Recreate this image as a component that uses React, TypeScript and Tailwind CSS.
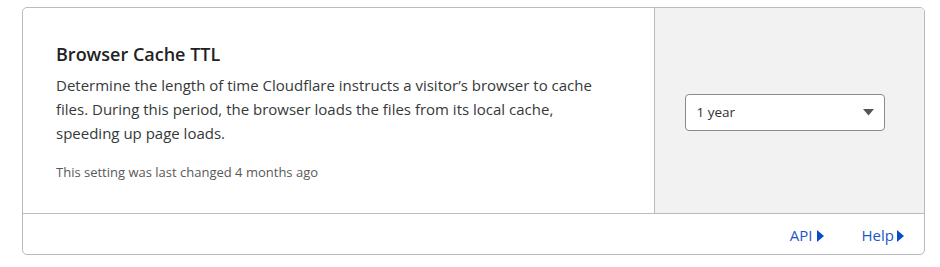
export default function App() {
  return (
    <div className="min-h-screen bg-white pt-[7px] pl-[22px]">
      <div
        className="w-[903px] overflow-hidden rounded-[5px] border border-[#bbbbbb] bg-white text-[#313131]"
        style={{ fontFamily: '"Open Sans", "Noto Sans", sans-serif' }}
      >
        <div className="flex h-[206px] border-b border-[#bbbbbb]">
          <div className="w-[631px] pl-[33px] pr-[20px] pt-[34px]">
            <h3 className="text-[18px] font-semibold leading-[24px] text-[#222]">Browser Cache TTL</h3>
            <p className="mt-[7px] w-[560px] text-[15px] leading-[24px] text-[#36393a]">
              Determine the length of time Cloudflare instructs a visitor’s browser to cache files. During this
              period, the browser loads the files from its local cache, speeding up page loads.
            </p>
            <p className="mt-[17px] text-[13px] leading-[20px] text-[#595959]">
              This setting was last changed 4 months ago
            </p>
          </div>
          <div className="flex flex-1 items-center justify-center border-l border-[#bbbbbb] bg-[#f2f2f2] pr-[10px] pt-[3px]">
            <button className="flex h-[37px] w-[200px] items-center justify-between rounded-[4px] border border-[#8a8a8a] bg-white pl-[11px] pr-[10px] text-[13.5px] text-[#333]">
              <span>1 year</span>
              <svg width="11" height="7" viewBox="0 0 11 7">
                <path d="M0 0 H11 L5.5 6.5 Z" fill="#555" />
              </svg>
            </button>
          </div>
        </div>
        <div className="flex h-[40px] items-center justify-end gap-[38px] pr-[20px] pt-[3px] text-[15px] text-[#1e55c8]">
          <a className="flex items-center gap-[4px]" href="#">
            API
            <svg width="7" height="12" viewBox="0 0 7 12">
              <path d="M0 0 L7 6 L0 12 Z" fill="#0a4cc8" />
            </svg>
          </a>
          <a className="flex items-center gap-[3px]" href="#">
            Help
            <svg width="7" height="12" viewBox="0 0 7 12">
              <path d="M0 0 L7 6 L0 12 Z" fill="#0a4cc8" />
            </svg>
          </a>
        </div>
      </div>
    </div>
  );
}
